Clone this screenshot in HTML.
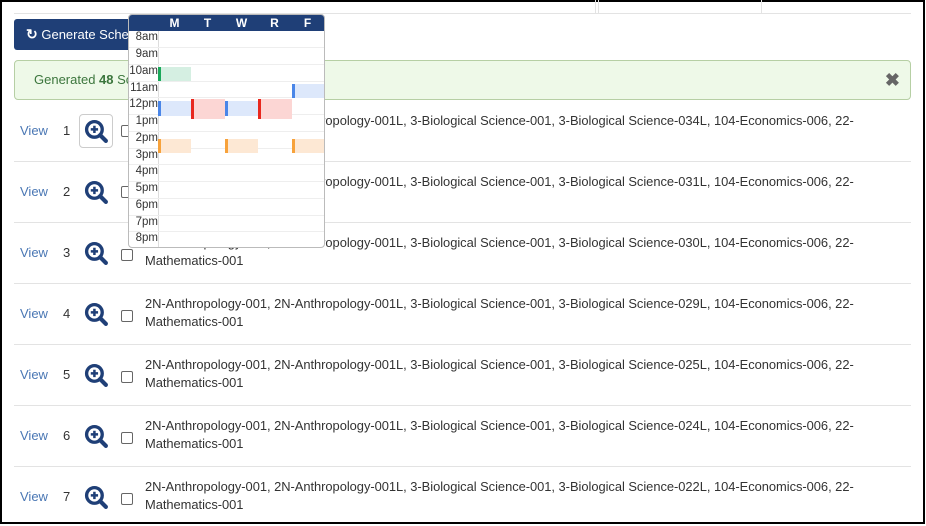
<!DOCTYPE html>
<html><head><meta charset="utf-8"><style>
*{box-sizing:border-box;margin:0;padding:0}
body{width:926px;height:526px;background:#fff;font-family:"Liberation Sans",sans-serif;font-size:13px;color:#333;position:relative;overflow:hidden}
.abs{position:absolute}
.frame{left:0;top:0;width:925px;height:524px;border:2px solid #000;border-right-width:2px}
.hl{height:1px;background:#e3e3e3}
.btn{left:14px;top:19px;width:130px;height:31px;background:#1f3f77;border-radius:3px;color:#fff;font-size:13px;line-height:31px;padding-left:12px;white-space:nowrap;overflow:hidden}
.alert{left:14px;top:60px;width:897px;height:40px;background:#eef9e8;border:1px solid #b6cfa4;border-radius:4px;color:#3c763d;line-height:38px;padding-left:19px}
.view{color:#4a77b4;left:20px}
.num{left:63px}
.cb{left:121px;width:12px;height:12px;border:1px solid #666;border-radius:2px;background:#fff}
.txt{left:145px;line-height:18px;white-space:nowrap;font-size:12.9px;letter-spacing:-0.03px}
.pop{left:128px;top:14px;width:197px;height:234px;background:#fff;border:1px solid #bbb;border-radius:4px;overflow:hidden}
.ph{left:0;top:0;width:197px;height:16px;background:#1f3f77;color:#fff;font-weight:bold;font-size:12px}
.ph span{position:absolute;top:1px;width:33px;text-align:center}
.tl{left:0;width:29px;text-align:right;font-size:11.5px;color:#333;line-height:14px}
.blk{position:absolute;height:14px}
</style></head><body>
<div class="abs frame"></div>
<div class="abs hl" style="left:14px;top:13px;width:897px"></div>
<div class="abs" style="left:595px;top:0;width:1px;height:14px;background:#e3e3e3"></div>
<div class="abs" style="left:598px;top:0;width:1px;height:14px;background:#e3e3e3"></div>
<div class="abs" style="left:761px;top:0;width:1px;height:14px;background:#e3e3e3"></div>
<div class="abs btn"><b style="font-size:14px">&#x21bb;</b> Generate Schedules</div>
<div class="abs alert">Generated <b>48</b> Schedules<span style="position:absolute;right:10px;top:0;color:#666;font-weight:bold;font-size:18px">&#x2716;</span></div>

<div class="abs hl" style="left:14px;top:161px;width:897px"></div>
<div class="abs hl" style="left:14px;top:222px;width:897px"></div>
<div class="abs hl" style="left:14px;top:283px;width:897px"></div>
<div class="abs hl" style="left:14px;top:344px;width:897px"></div>
<div class="abs hl" style="left:14px;top:405px;width:897px"></div>
<div class="abs hl" style="left:14px;top:466px;width:897px"></div>

<div class="abs" style="left:79px;top:114px;width:34px;height:34px;border:1px solid #ccc;border-radius:4px"></div>

<div class="abs view" style="top:123px">View</div><div class="abs num" style="top:123px">1</div>
<div class="abs view" style="top:184px">View</div><div class="abs num" style="top:184px">2</div>
<div class="abs view" style="top:245px">View</div><div class="abs num" style="top:245px">3</div>
<div class="abs view" style="top:306px">View</div><div class="abs num" style="top:306px">4</div>
<div class="abs view" style="top:367px">View</div><div class="abs num" style="top:367px">5</div>
<div class="abs view" style="top:428px">View</div><div class="abs num" style="top:428px">6</div>
<div class="abs view" style="top:489px">View</div><div class="abs num" style="top:489px">7</div>

<svg class="abs" style="left:84px;top:119px" width="25" height="25" viewBox="0 0 24 24"><circle cx="10" cy="10" r="7.5" fill="none" stroke="#1f3f77" stroke-width="3.2"/><path d="M15.5 15.5L21 21" stroke="#1f3f77" stroke-width="4" stroke-linecap="round"/><path d="M10 6.5v7M6.5 10h7" stroke="#1f3f77" stroke-width="2.4"/></svg>
<svg class="abs" style="left:84px;top:180px" width="25" height="25" viewBox="0 0 24 24"><circle cx="10" cy="10" r="7.5" fill="none" stroke="#1f3f77" stroke-width="3.2"/><path d="M15.5 15.5L21 21" stroke="#1f3f77" stroke-width="4" stroke-linecap="round"/><path d="M10 6.5v7M6.5 10h7" stroke="#1f3f77" stroke-width="2.4"/></svg>
<svg class="abs" style="left:84px;top:241px" width="25" height="25" viewBox="0 0 24 24"><circle cx="10" cy="10" r="7.5" fill="none" stroke="#1f3f77" stroke-width="3.2"/><path d="M15.5 15.5L21 21" stroke="#1f3f77" stroke-width="4" stroke-linecap="round"/><path d="M10 6.5v7M6.5 10h7" stroke="#1f3f77" stroke-width="2.4"/></svg>
<svg class="abs" style="left:84px;top:302px" width="25" height="25" viewBox="0 0 24 24"><circle cx="10" cy="10" r="7.5" fill="none" stroke="#1f3f77" stroke-width="3.2"/><path d="M15.5 15.5L21 21" stroke="#1f3f77" stroke-width="4" stroke-linecap="round"/><path d="M10 6.5v7M6.5 10h7" stroke="#1f3f77" stroke-width="2.4"/></svg>
<svg class="abs" style="left:84px;top:363px" width="25" height="25" viewBox="0 0 24 24"><circle cx="10" cy="10" r="7.5" fill="none" stroke="#1f3f77" stroke-width="3.2"/><path d="M15.5 15.5L21 21" stroke="#1f3f77" stroke-width="4" stroke-linecap="round"/><path d="M10 6.5v7M6.5 10h7" stroke="#1f3f77" stroke-width="2.4"/></svg>
<svg class="abs" style="left:84px;top:424px" width="25" height="25" viewBox="0 0 24 24"><circle cx="10" cy="10" r="7.5" fill="none" stroke="#1f3f77" stroke-width="3.2"/><path d="M15.5 15.5L21 21" stroke="#1f3f77" stroke-width="4" stroke-linecap="round"/><path d="M10 6.5v7M6.5 10h7" stroke="#1f3f77" stroke-width="2.4"/></svg>
<svg class="abs" style="left:84px;top:485px" width="25" height="25" viewBox="0 0 24 24"><circle cx="10" cy="10" r="7.5" fill="none" stroke="#1f3f77" stroke-width="3.2"/><path d="M15.5 15.5L21 21" stroke="#1f3f77" stroke-width="4" stroke-linecap="round"/><path d="M10 6.5v7M6.5 10h7" stroke="#1f3f77" stroke-width="2.4"/></svg>

<div class="abs cb" style="top:125px"></div>
<div class="abs cb" style="top:186px"></div>
<div class="abs cb" style="top:249px"></div>
<div class="abs cb" style="top:310px"></div>
<div class="abs cb" style="top:371px"></div>
<div class="abs cb" style="top:432px"></div>
<div class="abs cb" style="top:493px"></div>

<div class="abs txt" style="top:112px">2N-Anthropology-001, 2N-Anthropology-001L, 3-Biological Science-001, 3-Biological Science-034L, 104-Economics-006, 22-<br>Mathematics-001</div>
<div class="abs txt" style="top:173px">2N-Anthropology-001, 2N-Anthropology-001L, 3-Biological Science-001, 3-Biological Science-031L, 104-Economics-006, 22-<br>Mathematics-001</div>
<div class="abs txt" style="top:234px">2N-Anthropology-001, 2N-Anthropology-001L, 3-Biological Science-001, 3-Biological Science-030L, 104-Economics-006, 22-<br>Mathematics-001</div>
<div class="abs txt" style="top:295px">2N-Anthropology-001, 2N-Anthropology-001L, 3-Biological Science-001, 3-Biological Science-029L, 104-Economics-006, 22-<br>Mathematics-001</div>
<div class="abs txt" style="top:356px">2N-Anthropology-001, 2N-Anthropology-001L, 3-Biological Science-001, 3-Biological Science-025L, 104-Economics-006, 22-<br>Mathematics-001</div>
<div class="abs txt" style="top:417px">2N-Anthropology-001, 2N-Anthropology-001L, 3-Biological Science-001, 3-Biological Science-024L, 104-Economics-006, 22-<br>Mathematics-001</div>
<div class="abs txt" style="top:478px">2N-Anthropology-001, 2N-Anthropology-001L, 3-Biological Science-001, 3-Biological Science-022L, 104-Economics-006, 22-<br>Mathematics-001</div>

<div class="abs pop">
<div class="abs ph"><span style="left:29px">M</span><span style="left:62px">T</span><span style="left:96px">W</span><span style="left:129px">R</span><span style="left:162px">F</span></div>
<div class="abs" style="left:29px;top:16px;width:1px;height:220px;background:#ddd"></div>
<div class="abs" style="left:0;top:32px;width:197px;height:1px;background:#eee"></div>
<div class="abs" style="left:0;top:49px;width:197px;height:1px;background:#eee"></div>
<div class="abs" style="left:0;top:66px;width:197px;height:1px;background:#eee"></div>
<div class="abs" style="left:0;top:82px;width:197px;height:1px;background:#eee"></div>
<div class="abs" style="left:0;top:99px;width:197px;height:1px;background:#eee"></div>
<div class="abs" style="left:0;top:116px;width:197px;height:1px;background:#eee"></div>
<div class="abs" style="left:0;top:133px;width:197px;height:1px;background:#eee"></div>
<div class="abs" style="left:0;top:149px;width:197px;height:1px;background:#eee"></div>
<div class="abs" style="left:0;top:166px;width:197px;height:1px;background:#eee"></div>
<div class="abs" style="left:0;top:183px;width:197px;height:1px;background:#eee"></div>
<div class="abs" style="left:0;top:200px;width:197px;height:1px;background:#eee"></div>
<div class="abs" style="left:0;top:216px;width:197px;height:1px;background:#eee"></div>
<div class="abs tl" style="top:15px">8am</div>
<div class="abs tl" style="top:32px">9am</div>
<div class="abs tl" style="top:49px">10am</div>
<div class="abs tl" style="top:66px">11am</div>
<div class="abs tl" style="top:82px">12pm</div>
<div class="abs tl" style="top:99px">1pm</div>
<div class="abs tl" style="top:116px">2pm</div>
<div class="abs tl" style="top:133px">3pm</div>
<div class="abs tl" style="top:149px">4pm</div>
<div class="abs tl" style="top:166px">5pm</div>
<div class="abs tl" style="top:183px">6pm</div>
<div class="abs tl" style="top:200px">7pm</div>
<div class="abs tl" style="top:216px">8pm</div>
<div class="blk" style="left:29px;top:52px;width:33px;background:#d5efe2;border-left:3px solid #1aa85a"></div>
<div class="blk" style="left:163px;top:69px;width:34px;background:#dde8fb;border-left:3px solid #4a86e8"></div>
<div class="blk" style="left:29px;top:86px;width:33px;height:15px;background:#dde8fb;border-left:3px solid #4a86e8"></div>
<div class="blk" style="left:96px;top:86px;width:33px;height:15px;background:#dde8fb;border-left:3px solid #4a86e8"></div>
<div class="blk" style="left:62px;top:84px;width:34px;height:20px;background:#fcd6d4;border-left:3px solid #e8281e"></div>
<div class="blk" style="left:129px;top:84px;width:34px;height:20px;background:#fcd6d4;border-left:3px solid #e8281e"></div>
<div class="blk" style="left:29px;top:124px;width:33px;background:#fde8d4;border-left:3px solid #f7a23b"></div>
<div class="blk" style="left:96px;top:124px;width:33px;background:#fde8d4;border-left:3px solid #f7a23b"></div>
<div class="blk" style="left:163px;top:124px;width:34px;background:#fde8d4;border-left:3px solid #f7a23b"></div>
</div>
</body></html>
